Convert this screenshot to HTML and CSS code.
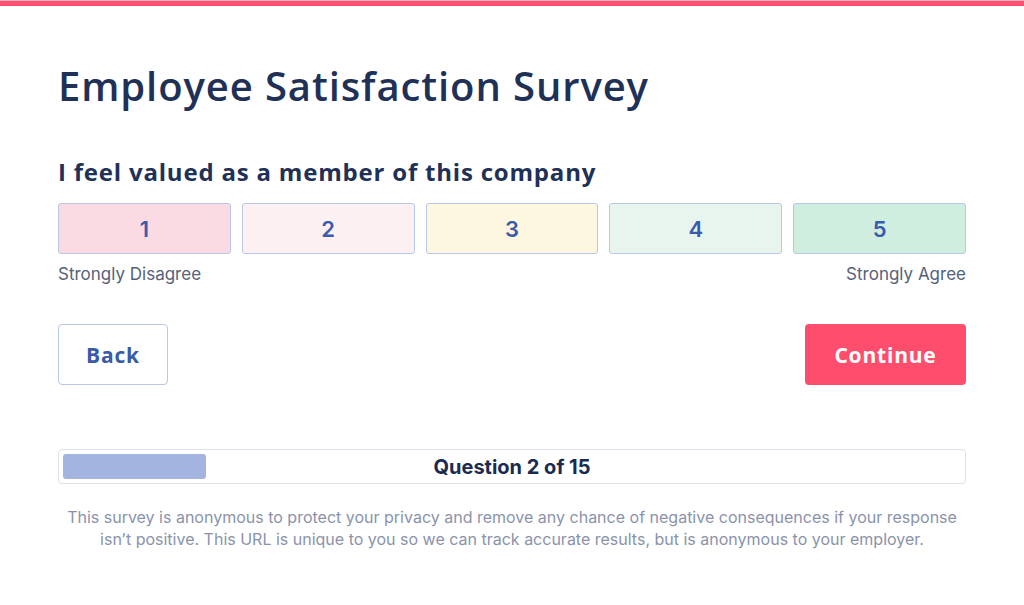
FILE: index.html
```html
<!DOCTYPE html>
<html>
<head>
<meta charset="utf-8">
<link rel="stylesheet" href="styles.css">
</head>
<body>
<div class="topbar"></div>
<main class="survey">
  <h1 class="title">Employee Satisfaction Survey</h1>
  <h2 class="question">I feel valued as a member of this company</h2>
  <div class="scale">
    <button class="opt opt1">1</button>
    <button class="opt opt2">2</button>
    <button class="opt opt3">3</button>
    <button class="opt opt4">4</button>
    <button class="opt opt5">5</button>
  </div>
  <div class="labels">
    <span>Strongly Disagree</span>
    <span>Strongly Agree</span>
  </div>
  <div class="nav">
    <button class="btn back">Back</button>
    <button class="btn continue">Continue</button>
  </div>
  <div class="progress">
    <div class="fill" style="width: 143px"></div>
    <div class="progress-text">Question 2 of 15</div>
  </div>
  <p class="note">This survey is anonymous to protect your privacy and remove any chance of negative consequences if your response isn’t positive. This URL is unique to you so we can track accurate results, but is anonymous to your employer.</p>
</main>
</body>
</html>
```
FILE: styles.css
```css
* { box-sizing: border-box; }
html, body { margin: 0; padding: 0; background: #fff; }
body { font-family: Inter, "Liberation Sans", sans-serif; color: #1f3157; }
.topbar { height: 6px; border-top: 1px solid #ffb3c2; background: #ff5073; }
.survey { width: 908px; margin: 0 auto; display: flex; flex-direction: column; }
.title {
  margin: 52px 0 0;
  font-family: "Open Sans", Inter, sans-serif;
  font-weight: 560;
  font-size: 40px;
  line-height: 56px;
  color: #1f3157;
  letter-spacing: 0.9px;
}
.question {
  margin: 42px 0 0;
  font-family: "Open Sans", Inter, sans-serif;
  font-weight: 700;
  font-size: 24px;
  line-height: 32px;
  color: #1f3157;
  letter-spacing: 0.8px;
}
.scale { display: grid; grid-template-columns: repeat(5, 1fr); gap: 11px; margin-top: 15px; }
.opt {
  height: 51px;
  border: 1px solid #b9c8e9;
  border-radius: 3px;
  font-family: Inter, sans-serif;
  font-weight: 600;
  font-size: 22px;
  color: #3a5bab;
  padding: 0;
}
.opt1 { background: #fadbe3; }
.opt2 { background: #fdf0f3; }
.opt3 { background: #fdf7e0; }
.opt4 { background: #e8f5ee; }
.opt5 { background: #cfeee0; }
.labels { display: flex; justify-content: space-between; margin-top: 9px; font-size: 17px; line-height: 22px; color: #55627b; }
.nav { display: flex; justify-content: space-between; margin-top: 39px; }
.btn {
  height: 61px;
  border-radius: 4px;
  font-family: "Open Sans", Inter, sans-serif;
  font-weight: 700;
  font-size: 21px;
  letter-spacing: 0.8px;
  padding: 0;
}
.back { width: 110px; background: #fff; border: 1px solid #b9c8e9; color: #3b5aa8; }
.continue { width: 161px; background: #ff4d6d; border: none; color: #fff; }
.progress {
  position: relative;
  margin-top: 64px;
  height: 35px;
  border: 1px solid #dde2ea;
  border-radius: 4px;
  padding: 4px;
}
.fill { height: 25px; background: #a2b4df; border-radius: 3px; }
.progress-text {
  position: absolute; inset: 0;
  display: flex; align-items: center; justify-content: center;
  font-weight: 700; font-size: 20px; color: #1a2b50;
}
.note {
  margin: 22px 0 0;
  text-align: center;
  font-size: 16px;
  line-height: 22px;
  color: #8a93ab;
}
```
